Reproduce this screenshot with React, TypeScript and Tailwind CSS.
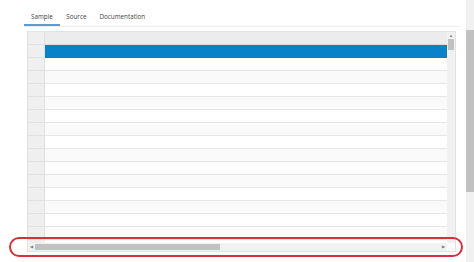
const tabs = ["Sample", "Source", "Documentation"];
const rows = Array.from({ length: 16 }, (_, i) => i);

export default function App() {
  return (
    <div
      className="flex h-[262px] w-[474px] overflow-hidden bg-white"
      style={{ fontFamily: '"Open Sans", "Liberation Sans", sans-serif' }}
    >
      <div className="relative flex-1">
        {/* tabs */}
        <div className="ml-[24px] mr-[6px] mt-[10px] flex h-[17px] border-b border-[#ececec] text-[6.3px] text-[#444]">
          {tabs.map((t, i) => (
            <div
              key={t}
              className={
                i === 0
                  ? "border-b-2 border-[#5b9bd1] px-[7px] leading-[14px]"
                  : "px-[6.5px] leading-[14px]"
              }
            >
              {t}
            </div>
          ))}
        </div>

        {/* grid */}
        <div className="ml-[27px] mt-[4px] flex h-[221px] w-[429px] flex-col border border-[#e2e2e2]">
          <div className="flex min-h-0 flex-1">
            <div className="w-[17px] bg-[#efefef]">
              {rows.map((r) => (
                <div key={r} className="h-[13px] border-b border-r border-[#e0e0e0]" />
              ))}
            </div>
            <div className="flex-1 overflow-hidden">
              <div className="h-[13px] border-b border-[#dcdcdc] bg-[#ececec]" />
              {rows.slice(1).map((r) => (
                <div
                  key={r}
                  className={
                    r === 1
                      ? "h-[13px] bg-[#0a82c9]"
                      : r % 2 === 0
                        ? "h-[13px] border-b border-[#e6e6e6] bg-white"
                        : "h-[13px] border-b border-[#e6e6e6] bg-[#fafafa]"
                  }
                />
              ))}
            </div>
            <div className="flex w-[8px] flex-col items-center bg-[#f1f1f1]">
              <div className="mt-[2px] text-[4px] leading-[4px] text-[#777]">▲</div>
              <div className="mt-[1px] h-[11px] w-[6px] bg-[#c1c1c1]" />
            </div>
          </div>
          <div className="flex h-[8px]">
            <div className="flex flex-1 items-center bg-[#f1f1f1]">
              <span className="ml-[2px] text-[4px] leading-[4px] text-[#777]">◀</span>
              <div className="ml-[2px] h-[6px] w-[185px] bg-[#c1c1c1]" />
              <span className="ml-auto mr-[2px] text-[4px] leading-[4px] text-[#777]">▶</span>
            </div>
            <div className="w-[8px] bg-white" />
          </div>
        </div>

        {/* red highlight */}
        <div className="absolute left-[9px] top-[237px] h-[20px] w-[454px] rounded-[10px] border-2 border-[#d8303a]" />
      </div>

      {/* page scrollbar */}
      <div className="w-[8px] bg-[#f1f1f1] pt-[30px]">
        <div className="h-[162px] w-full bg-[#c1c1c1]" />
      </div>
    </div>
  );
}
